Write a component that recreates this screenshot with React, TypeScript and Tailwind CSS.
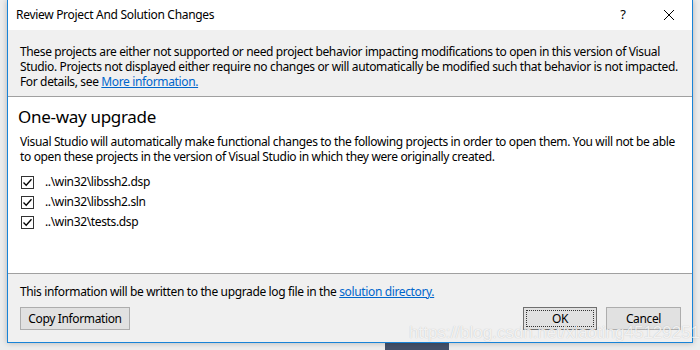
const files = ['..\\win32\\libssh2.dsp', '..\\win32\\libssh2.sln', '..\\win32\\tests.dsp'];

const CheckBox = () => (
  <span className="w-[13px] h-[13px] border border-[#333] bg-white flex items-center justify-center">
    <svg width="11" height="11" viewBox="0 0 11 11">
      <path d="M1.5 5.5 L4.2 8.3 L9.5 2.2" fill="none" stroke="#000" strokeWidth="1.3" />
    </svg>
  </span>
);

const Button = ({ label, focused, width }: { label: string; focused?: boolean; width: string }) => (
  <button className={`${width} h-[23px] bg-[#e1e1e1] border ${focused ? 'border-[#6f6f6f]' : 'border-[#adadad]'} p-[2px] text-[12px] text-black`}>
    <span className={`w-full h-full flex items-center justify-center ${focused ? 'border border-dotted border-[#333]' : ''}`}>
      {label}
    </span>
  </button>
);

export default function App() {
  return (
    <div className="w-[700px] h-[350px] bg-[#ededed] relative overflow-hidden font-['Segoe_UI','Noto_Sans',sans-serif] text-[12px] tracking-[-0.36px] text-black whitespace-nowrap">
      <div className="absolute left-[385px] top-[340px] w-[64px] h-[10px] bg-[#44516a]" />
      <div className="relative ml-[7px] w-[686px] h-[343px] border-x border-b border-[#1883d7] bg-white flex flex-col shadow-[0_0_6px_rgba(0,0,0,0.25)]">
        <div className="h-[30px] flex items-center pl-[8px] bg-white shrink-0 tracking-[-0.3px]">
          <span className="flex-1">Review Project And Solution Changes</span>
          <span className="w-[46px] text-center text-[13px]">?</span>
          <span className="w-[46px] flex items-center justify-center">
            <svg width="10" height="10" viewBox="0 0 10 10">
              <path d="M0 0 L10 10 M10 0 L0 10" stroke="#000" strokeWidth="1" />
            </svg>
          </span>
        </div>
        <div className="h-[67px] shrink-0 bg-[#f0f0f0] border-b border-[#a0a0a0] pl-[12px] pt-[14px] leading-[15px]">
          These projects are either not supported or need project behavior impacting modifications to open in this version of Visual
          <br />
          Studio. Projects not displayed either require no changes or will automatically be modified such that behavior is not impacted.
          <br />
          For details, see <span className="text-[#0066cc] underline">More information.</span>
        </div>
        <div className="h-[177px] shrink-0 border-b border-[#a0a0a0] pl-[10px] pt-[8px]">
          <div className="text-[17px] leading-[24px] tracking-[-0.3px]">One-way upgrade</div>
          <div className="mt-[5px] pl-[2px] leading-[15px]">
            Visual Studio will automatically make functional changes to the following projects in order to open them. You will not be able
            <br />
            to open these projects in the version of Visual Studio in which they were originally created.
          </div>
          <div className="mt-[8px] pl-[3px] flex flex-col">
            {files.map(f => (
              <div key={f} className="h-[20px] flex items-center gap-[11px]">
                <CheckBox />
                <span>{f}</span>
              </div>
            ))}
          </div>
        </div>
        <div className="flex-1 bg-[#f0f0f0] pl-[12px] pr-[11px] pt-[10px]">
          <div className="leading-[15px]">
            This information will be written to the upgrade log file in the{' '}
            <span className="text-[#0066cc] underline">solution directory.</span>
          </div>
          <div className="mt-[8px] flex items-center">
            <Button label="Copy Information" width="w-[110px]" />
            <div className="flex-1" />
            <Button label="OK" focused width="w-[74px]" />
            <div className="w-[9px]" />
            <Button label="Cancel" width="w-[75px]" />
          </div>
        </div>
      </div>
      <div className="absolute left-[409px] top-[320px] font-['Liberation_Sans',sans-serif] tracking-normal text-[17px] text-white/80 [text-shadow:0_0_1px_rgba(0,0,0,0.25)]">
        https://blog.csdn.net/xiaoting451292510
      </div>
    </div>
  );
}
